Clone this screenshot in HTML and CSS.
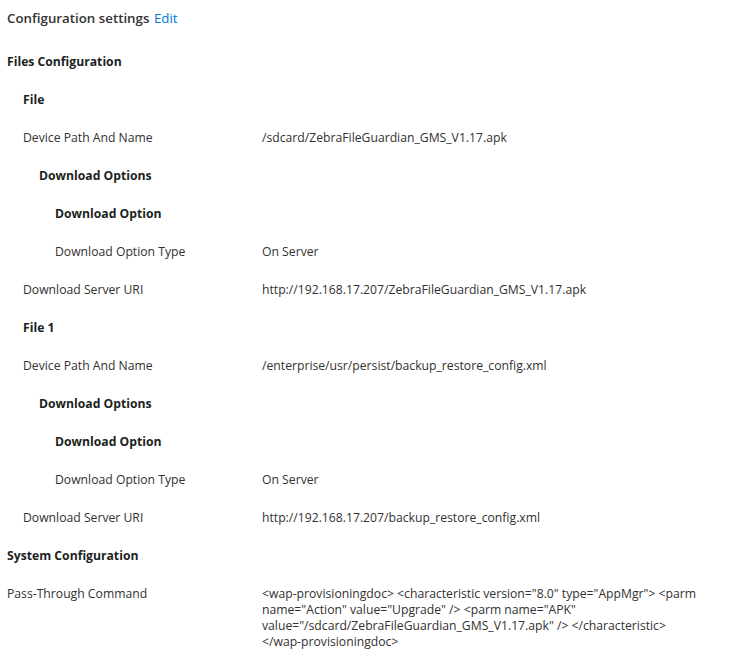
FILE: index.html
```html
<!DOCTYPE html>
<html lang="en">
<head>
<meta charset="utf-8">
<title>Configuration settings</title>
<link rel="stylesheet" href="styles.css">
</head>
<body>
<div class="page">
  <div class="title">Configuration settings <a class="edit" href="#">Edit</a></div>
  <div class="list">
    <div class="row head lv0"><span class="label">Files Configuration</span></div>
    <div class="row head lv1"><span class="label">File</span></div>
    <div class="row lv1"><span class="label">Device Path And Name</span><span class="value">/sdcard/ZebraFileGuardian_GMS_V1.17.apk</span></div>
    <div class="row head lv2"><span class="label">Download Options</span></div>
    <div class="row head lv3"><span class="label">Download Option</span></div>
    <div class="row lv3"><span class="label">Download Option Type</span><span class="value">On Server</span></div>
    <div class="row lv1"><span class="label">Download Server URI</span><span class="value">http://192.168.17.207/ZebraFileGuardian_GMS_V1.17.apk</span></div>
    <div class="row head lv1"><span class="label">File 1</span></div>
    <div class="row lv1"><span class="label">Device Path And Name</span><span class="value">/enterprise/usr/persist/backup_restore_config.xml</span></div>
    <div class="row head lv2"><span class="label">Download Options</span></div>
    <div class="row head lv3"><span class="label">Download Option</span></div>
    <div class="row lv3"><span class="label">Download Option Type</span><span class="value">On Server</span></div>
    <div class="row lv1"><span class="label">Download Server URI</span><span class="value">http://192.168.17.207/backup_restore_config.xml</span></div>
    <div class="row head lv0"><span class="label">System Configuration</span></div>
    <div class="row lv0"><span class="label">Pass-Through Command</span><span class="value">&lt;wap-provisioningdoc&gt; &lt;characteristic version="8.0" type="AppMgr"&gt; &lt;parm name="Action" value="Upgrade" /&gt; &lt;parm name="APK" value="/sdcard/ZebraFileGuardian_GMS_V1.17.apk" /&gt; &lt;/characteristic&gt; &lt;/wap-&#8288;provisioningdoc&gt;</span></div>
  </div>
</div>
</body>
</html>
```

FILE: styles.css
```css
html, body {
  margin: 0;
  padding: 0;
  background: #ffffff;
}
body {
  font-family: "Open Sans", "Noto Sans", sans-serif;
  font-size: 12.2px;
  color: #323130;
}
.page {
  padding: 8px 10px 0 7px;
}
.title {
  font-size: 13.3px;
  font-weight: 600;
  line-height: 20px;
  color: #323130;
  margin-bottom: 15px;
}
.edit {
  color: #0078d4;
  font-weight: 400;
  text-decoration: none;
  margin-left: 1px;
}
.list {
  display: flex;
  flex-direction: column;
}
.row {
  display: grid;
  grid-template-columns: 255px 1fr;
  padding: 11px 0;
  line-height: 16px;
}
.head .label {
  font-weight: 700;
  color: #201f1e;
}
.lv0 .label { padding-left: 0; }
.lv1 .label { padding-left: 16px; }
.lv2 .label { padding-left: 32px; }
.lv3 .label { padding-left: 48px; }
```
